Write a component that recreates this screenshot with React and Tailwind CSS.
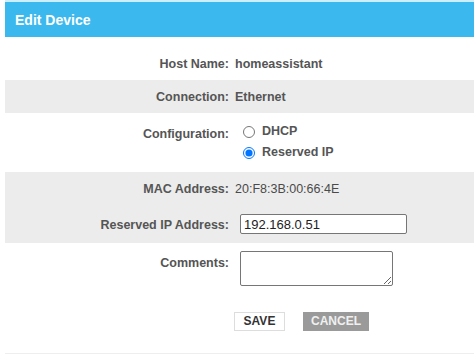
export default function App() {
  const font = { fontFamily: '"Liberation Sans", Arial, sans-serif' }
  return (
    <div className="w-[474px] h-[354px] bg-white overflow-hidden" style={font}>
      <div className="ml-[5px] border-t-2 border-[#cdeefb]">
        <div className="h-[35px] bg-[#3bb9ef] flex items-center pl-[10px]">
          <h2 className="text-[14px] font-bold text-white leading-none">Edit Device</h2>
        </div>

        <div className="flex pt-[20px] pb-[8px] text-[12.5px] leading-[15px] font-bold text-[#555]">
          <div className="w-[224px] text-right">Host Name:</div>
          <div className="ml-[6px]">homeassistant</div>
        </div>

        <div className="flex pt-[10px] pb-[8px] bg-[#ececec] text-[12.5px] leading-[15px] font-bold text-[#555]">
          <div className="w-[224px] text-right">Connection:</div>
          <div className="ml-[6px]">Ethernet</div>
        </div>

        <div className="flex pt-[8px] pb-[9px] text-[12.5px] font-bold text-[#555]">
          <div className="w-[224px] text-right leading-[21px] mt-[3px]">Configuration:</div>
          <div className="ml-[14px] flex flex-col">
            <label className="flex items-center h-[21px] gap-[7px]">
              <input type="radio" name="cfg" className="w-[12px] h-[12px] m-0" />
              <span>DHCP</span>
            </label>
            <label className="flex items-center h-[21px] gap-[7px]">
              <input type="radio" name="cfg" defaultChecked className="w-[12px] h-[12px] m-0" />
              <span>Reserved IP</span>
            </label>
          </div>
        </div>

        <div className="bg-[#ececec] pt-[10px] pb-[8px] text-[12.5px] text-[#555]">
          <div className="flex leading-[15px]">
            <div className="w-[224px] text-right font-bold">MAC Address:</div>
            <div className="ml-[6px] text-[#4a4a4a]">20:F8:3B:00:66:4E</div>
          </div>
          <div className="flex items-center mt-[17px]">
            <div className="w-[224px] text-right font-bold mt-[2px]">Reserved IP Address:</div>
            <input
              type="text"
              defaultValue="192.168.0.51"
              className="ml-[11px] w-[167px] h-[20px] px-[3px] border border-[#767676] rounded-[2px] bg-white text-[13px] text-[#222] outline-none"
              style={font}
            />
          </div>
        </div>

        <div className="flex pt-[8px] text-[12.5px] font-bold text-[#555]">
          <div className="w-[224px] text-right leading-[15px] mt-[5px]">Comments:</div>
          <textarea
            className="ml-[11px] w-[153px] h-[35px] border border-[#767676] rounded-[2px] bg-white outline-none"
          />
        </div>

        <div className="flex mt-[26px]">
          <div className="w-[224px]" />
          <div className="ml-[5px] flex gap-[18px]">
            <button className="w-[51px] h-[19px] bg-white border border-[#ddd] text-[12px] font-bold text-[#333] leading-none">
              SAVE
            </button>
            <button className="w-[66px] h-[19px] bg-[#9a9a9a] text-[12px] font-bold text-[#f0f0f0] leading-none">
              CANCEL
            </button>
          </div>
        </div>

        <div className="mt-[22px] h-[3px] bg-[#eeeeee]" />
      </div>
    </div>
  )
}
